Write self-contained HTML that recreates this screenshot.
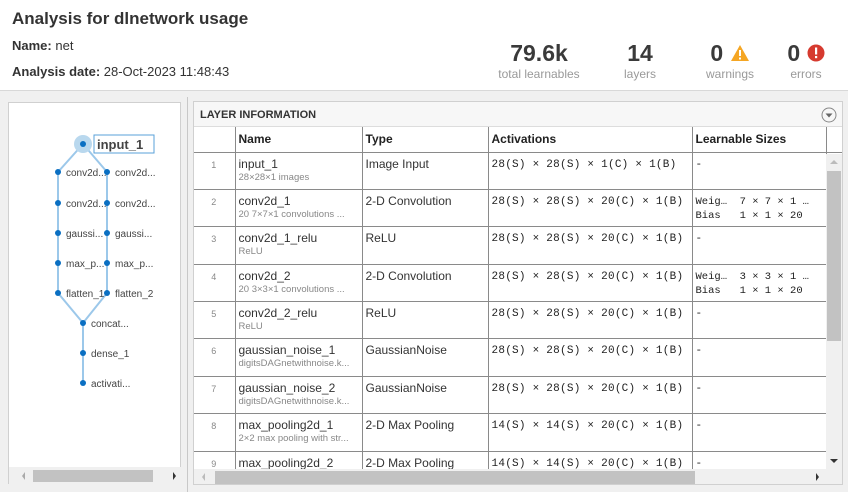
<!DOCTYPE html>
<html><head><style>
*{margin:0;padding:0;box-sizing:border-box}
body{width:848px;height:492px;background:#f0f0f0;font-family:"Liberation Sans",sans-serif;position:relative;overflow:hidden;color:#333}
.hdr{position:absolute;left:0;top:0;width:848px;height:91px;background:#fff;border-bottom:1px solid #d8d8d8}
.t{position:absolute;left:12px;top:9px;font-size:17px;font-weight:bold;color:#333}
.l1{position:absolute;left:12px;top:38px;font-size:13px}
.l2{position:absolute;left:12px;top:64px;font-size:13px}
.stat{position:absolute;top:40px;text-align:center;font-size:23px;font-weight:bold;color:#3a3a3a}
.stat span{display:block;font-size:12px;font-weight:normal;color:#999;margin-top:0px}
.lp{position:absolute;left:8px;top:102px;width:173px;height:382px;background:#fff;border:1px solid #d0d0d0}
.div{position:absolute;left:187px;top:97px;width:1px;height:395px;background:#c8c8c8}
.rp{position:absolute;left:193px;top:101px;width:650px;height:384px;background:#fff;border:1px solid #d0d0d0;overflow:hidden}
.li{position:absolute;left:0;top:0;width:650px;height:25px;background:#f7f7f7;border-bottom:1px solid #ddd;font-size:11px;font-weight:bold;color:#333;padding:7px 0 0 6px}
table{position:absolute;left:-1px;top:25px;width:653px;border-collapse:collapse;table-layout:fixed;font-size:12px}
td,th{border:1px solid #8a8a8a;vertical-align:top;overflow:hidden;white-space:nowrap;text-overflow:clip}
th{height:25px;text-align:left;font-weight:bold;padding:5px 3px;font-size:12px;color:#222;border-top:none}
td{height:37.4px;padding:4px 3px 0}
td.n{text-align:center;color:#888;font-size:9px;padding-top:7px}
.s{font-size:9.5px;color:#888;margin-top:1px}
.m{font-family:"Liberation Mono",monospace;font-size:11px;letter-spacing:0.25px;color:#222;padding-top:6px}
.p{white-space:pre;font-size:10.5px;letter-spacing:0;line-height:14px;padding-top:5px}
.vs{position:absolute;left:632px;top:52px;width:16px;height:315px;background:#f0f0f0}
.hs{position:absolute;left:0;top:367px;width:650px;height:16px;background:#f0f0f0}
</style></head><body>
<div class="hdr">
<div class="t">Analysis for dlnetwork usage</div>
<div class="l1"><b>Name:</b> net</div>
<div class="l2"><b>Analysis date:</b> 28-Oct-2023 11:48:43</div>
<div class="stat" style="left:496px;width:86px">79.6k<span>total learnables</span></div>
<div class="stat" style="left:612px;width:56px">14<span>layers</span></div>
<div class="stat" style="left:700px;width:60px">0 <svg width="20" height="18" viewBox="0 0 20 18" style="vertical-align:-1px"><path d="M10 1L19 17H1Z" fill="#f5a623"/><rect x="9" y="6" width="2" height="6" fill="#fff"/><rect x="9" y="13.5" width="2" height="2" fill="#fff"/></svg><span>warnings</span></div>
<div class="stat" style="left:782px;width:48px">0 <svg width="18" height="18" viewBox="0 0 18 18" style="vertical-align:-1px"><circle cx="9" cy="9" r="8.5" fill="#d63a2f"/><rect x="8" y="3.5" width="2.2" height="7" fill="#fff"/><rect x="8" y="12" width="2.2" height="2.2" fill="#fff"/></svg><span>errors</span></div>
</div>
<div class="lp">
<svg width="173" height="382" style="position:absolute;left:-1px;top:-1px" font-family="Liberation Sans" font-size="10" fill="#444">
<g stroke="#9cc8ea" stroke-width="2" fill="none">
<path d="M75 42L50 70V191L75 221V281M75 42L99 70V191L75 221"/>
</g>
<circle cx="75" cy="42" r="9" fill="#b9d8ee"/>
<g fill="#0a6fc2">
<circle cx="75" cy="42" r="3"/>
<circle cx="50" cy="70" r="3"/><circle cx="99" cy="70" r="3"/>
<circle cx="50" cy="101" r="3"/><circle cx="99" cy="101" r="3"/>
<circle cx="50" cy="131" r="3"/><circle cx="99" cy="131" r="3"/>
<circle cx="50" cy="161" r="3"/><circle cx="99" cy="161" r="3"/>
<circle cx="50" cy="191" r="3"/><circle cx="99" cy="191" r="3"/>
<circle cx="75" cy="221" r="3"/><circle cx="75" cy="251" r="3"/><circle cx="75" cy="281" r="3"/>
</g>
<rect x="86" y="33" width="60" height="18" fill="#fff" stroke="#5aa0d8"/>
<text x="89" y="47" font-size="13" font-weight="bold" fill="#444">input_1</text>
<text x="58" y="74">conv2d...</text><text x="107" y="74">conv2d...</text>
<text x="58" y="105">conv2d...</text><text x="107" y="105">conv2d...</text>
<text x="58" y="135">gaussi...</text><text x="107" y="135">gaussi...</text>
<text x="58" y="165">max_p...</text><text x="107" y="165">max_p...</text>
<text x="58" y="195">flatten_1</text><text x="107" y="195">flatten_2</text>
<text x="83" y="225">concat...</text><text x="83" y="255">dense_1</text><text x="83" y="285">activati...</text>
<rect x="1" y="365" width="172" height="17" fill="#f0f0f0"/>
<rect x="25" y="368" width="120" height="12" fill="#c2c2c2"/>
<path d="M17 370v8l-3-4z" fill="#aaa"/><path d="M165 370v8l3-4z" fill="#333"/>
</svg>
</div>
<div class="div"></div>
<div class="rp">
<div class="li">LAYER INFORMATION
<svg width="16" height="16" style="position:absolute;left:627px;top:5px"><circle cx="8" cy="8" r="7" fill="none" stroke="#888"/><path d="M4.5 6.5h7l-3.5 4z" fill="#666"/></svg></div>
<table>
<colgroup><col style="width:42px"><col style="width:127px"><col style="width:126px"><col style="width:204px"><col style="width:134px"><col style="width:20px"></colgroup>
<tr><th style="border-left:none"></th><th>Name</th><th>Type</th><th>Activations</th><th>Learnable Sizes</th><th></th></tr>
<tr><td class="n" style="border-left:none">1</td><td>input_1<div class="s">28×28×1 images</div></td><td>Image Input</td><td class="m">28(S) × 28(S) × 1(C) × 1(B)</td><td class="m">-</td><td></td></tr>
<tr><td class="n" style="border-left:none">2</td><td>conv2d_1<div class="s">20 7×7×1 convolutions ...</div></td><td>2-D Convolution</td><td class="m">28(S) × 28(S) × 20(C) × 1(B)</td><td class="m p">Weig…  7 × 7 × 1 …
Bias   1 × 1 × 20</td><td></td></tr>
<tr><td class="n" style="border-left:none">3</td><td>conv2d_1_relu<div class="s">ReLU</div></td><td>ReLU</td><td class="m">28(S) × 28(S) × 20(C) × 1(B)</td><td class="m">-</td><td></td></tr>
<tr><td class="n" style="border-left:none">4</td><td>conv2d_2<div class="s">20 3×3×1 convolutions ...</div></td><td>2-D Convolution</td><td class="m">28(S) × 28(S) × 20(C) × 1(B)</td><td class="m p">Weig…  3 × 3 × 1 …
Bias   1 × 1 × 20</td><td></td></tr>
<tr><td class="n" style="border-left:none">5</td><td>conv2d_2_relu<div class="s">ReLU</div></td><td>ReLU</td><td class="m">28(S) × 28(S) × 20(C) × 1(B)</td><td class="m">-</td><td></td></tr>
<tr><td class="n" style="border-left:none">6</td><td>gaussian_noise_1<div class="s">digitsDAGnetwithnoise.k...</div></td><td>GaussianNoise</td><td class="m">28(S) × 28(S) × 20(C) × 1(B)</td><td class="m">-</td><td></td></tr>
<tr><td class="n" style="border-left:none">7</td><td>gaussian_noise_2<div class="s">digitsDAGnetwithnoise.k...</div></td><td>GaussianNoise</td><td class="m">28(S) × 28(S) × 20(C) × 1(B)</td><td class="m">-</td><td></td></tr>
<tr><td class="n" style="border-left:none">8</td><td>max_pooling2d_1<div class="s">2×2 max pooling with str...</div></td><td>2-D Max Pooling</td><td class="m">14(S) × 14(S) × 20(C) × 1(B)</td><td class="m">-</td><td></td></tr>
<tr><td class="n" style="border-left:none">9</td><td>max_pooling2d_2<div class="s">2×2 max pooling</div></td><td>2-D Max Pooling</td><td class="m">14(S) × 14(S) × 20(C) × 1(B)</td><td class="m">-</td><td></td></tr>
</table>
<div class="vs"><div style="position:absolute;left:1px;top:17px;width:14px;height:170px;background:#c2c2c2"></div><svg width="16" height="315" style="position:absolute;left:0;top:0"><path d="M4 10h8l-4-4z" fill="#bbb"/><path d="M4 305h8l-4 4z" fill="#333"/></svg></div>
<div class="hs"><div style="position:absolute;left:21px;top:2px;width:480px;height:13px;background:#c2c2c2"></div><svg width="650" height="16" style="position:absolute;left:0;top:0"><path d="M11 4v8l-3-4z" fill="#bbb"/><path d="M622 4v8l3-4z" fill="#333"/></svg></div>
</div>
</body></html>
